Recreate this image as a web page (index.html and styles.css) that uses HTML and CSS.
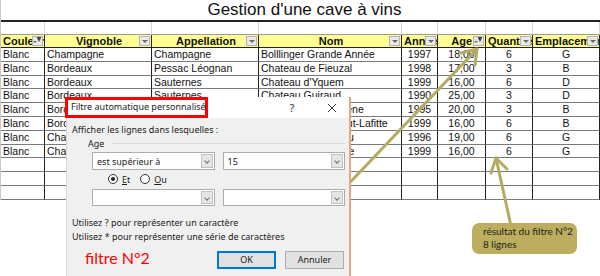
FILE: index.html
```html
<!DOCTYPE html>
<html lang="fr">
<head>
  <meta charset="UTF-8">
  <meta name="viewport" content="width=device-width, initial-scale=1.0">
  <link rel="stylesheet" href="styles.css">
  <title>Gestion d'une cave à vins</title>
</head>
<body>
  <div class="sheet">
    <h1 class="title">Gestion d'une cave à vins</h1>

    <div class="row blank">
      <div></div><div></div><div></div><div></div><div></div><div></div><div></div><div></div>
    </div>

    <div class="row head">
      <div class="left">Couleur<i class="fbtn on"></i></div>
      <div>Vignoble<i class="fbtn"></i></div>
      <div>Appellation<i class="fbtn"></i></div>
      <div>Nom<i class="fbtn"></i></div>
      <div class="left">Année<i class="fbtn"></i></div>
      <div class="right">Age<i class="fbtn on"></i></div>
      <div class="left">Quantité<i class="fbtn"></i></div>
      <div class="left">Emplacement<i class="fbtn"></i></div>
    </div>

    <div class="row">
      <div>Blanc</div><div>Champagne</div><div>Champagne</div><div>Bolllinger Grande Année</div>
      <div class="c">1997</div><div class="c">18,00</div><div class="c">6</div><div class="c">G</div>
    </div>
    <div class="row">
      <div>Blanc</div><div>Bordeaux</div><div>Pessac Léognan</div><div>Chateau de Fieuzal</div>
      <div class="c">1998</div><div class="c">17,00</div><div class="c">3</div><div class="c">B</div>
    </div>
    <div class="row">
      <div>Blanc</div><div>Bordeaux</div><div>Sauternes</div><div>Chateau d'Yquem</div>
      <div class="c">1999</div><div class="c">16,00</div><div class="c">6</div><div class="c">D</div>
    </div>
    <div class="row">
      <div>Blanc</div><div>Bordeaux</div><div>Sauternes</div><div>Chateau Guiraud</div>
      <div class="c">1990</div><div class="c">25,00</div><div class="c">3</div><div class="c">D</div>
    </div>
    <div class="row">
      <div>Blanc</div><div>Bordeaux</div><div>Sauternes</div><div>Chateau Doisy Daëne</div>
      <div class="c">1995</div><div class="c">20,00</div><div class="c">3</div><div class="c">B</div>
    </div>
    <div class="row">
      <div>Blanc</div><div>Bordeaux</div><div>Pessac Léognan</div><div>Chateau Smith Haut-Lafitte</div>
      <div class="c">1999</div><div class="c">16,00</div><div class="c">6</div><div class="c">B</div>
    </div>
    <div class="row">
      <div>Blanc</div><div>Chablis</div><div>Chablis Grand Cru</div><div>Domaine Raveneau</div>
      <div class="c">1996</div><div class="c">19,00</div><div class="c">6</div><div class="c">G</div>
    </div>
    <div class="row">
      <div>Blanc</div><div>Champagne</div><div>Champagne</div><div>Krug Grande Cuvée</div>
      <div class="c">1999</div><div class="c">16,00</div><div class="c">6</div><div class="c">G</div>
    </div>
    <div class="row">
      <div></div><div></div><div></div><div></div><div></div><div></div><div></div><div></div>
    </div>
    <div class="row">
      <div></div><div></div><div></div><div></div><div></div><div></div><div></div><div></div>
    </div>
    <div class="row">
      <div></div><div></div><div></div><div></div><div></div><div></div><div></div><div></div>
    </div>
  </div>

  <!-- arrows pointing at the filtered column and at the result rows -->
  <svg class="arrows" width="600" height="276" viewBox="0 0 600 276">
    <g fill="none" stroke="#b5aa62" stroke-width="3" stroke-linecap="round" stroke-linejoin="round">
      <line x1="338" y1="195" x2="477" y2="49"/>
      <polyline points="461,53 477,49 475,65"/>
      <line x1="511" y1="226" x2="496" y2="158"/>
      <polyline points="491,173 496,158 507,169"/>
    </g>
  </svg>

  <div class="dialog">
    <div class="dlg-bar">
      <span class="dlg-title">Filtre automatique personnalisé</span>
      <span class="dlg-help">?</span>
      <span class="dlg-close">
        <svg width="10" height="10" viewBox="0 0 10 10"><path d="M1 1L9 9M9 1L1 9" stroke="#333" stroke-width="1"/></svg>
      </span>
    </div>
    <div class="dlg-body">
      <p class="dlg-prompt">Afficher les lignes dans lesquelles :</p>
      <div class="dlg-group"><span>Age</span></div>
      <div class="combo-row">
        <div class="combo"><span>est supérieur à</span><i class="drop"></i></div>
        <div class="combo"><span>15</span><i class="drop"></i></div>
      </div>
      <div class="radio-row">
        <span class="radio on"><i></i><span><u>E</u>t</span></span>
        <span class="radio"><i></i><span><u>O</u>u</span></span>
      </div>
      <div class="combo-row second">
        <div class="combo"><span></span><i class="drop"></i></div>
        <div class="combo"><span></span><i class="drop"></i></div>
      </div>
      <p class="hint">Utilisez ? pour représenter un caractère<br>Utilisez * pour représenter une série de caractères</p>
      <div class="dlg-foot">
        <span class="note">filtre N°2</span>
        <span class="btn default">OK</span>
        <span class="btn">Annuler</span>
      </div>
    </div>
  </div>

  <div class="callout">résultat du filtre N°2<br>8 lignes</div>
</body>
</html>
```

FILE: styles.css
```css
*{
  margin: 0;
  padding: 0;
  box-sizing: border-box;
}
body{
  width: 600px;
  height: 276px;
  overflow: hidden;
  position: relative;
  background-color: #fff;
  font-family: "Liberation Sans", Arial, sans-serif;
  color: #111;
}

/* ---- spreadsheet ---- */
.sheet{
  border-left: 1px solid #c8c8c8;
}
.title{
  height: 22px;
  border-bottom: 2px solid #222;
  text-align: center;
  font-weight: normal;
  font-size: 17px;
  line-height: 20px;
  padding-left: 8px;
}
.row{
  display: grid;
  grid-template-columns: 44px 107px 107px 143px 36px 48px 47px 67px;
  height: 13.8px;
}
.row > div{
  position: relative;
  border-right: 1px solid #222;
  border-bottom: 1px solid #7a7a7a;
  font-size: 10.5px;
  line-height: 12.8px;
  padding-left: 2px;
  white-space: nowrap;
  overflow: hidden;
}
.row > .c{
  text-align: center;
  padding-left: 0;
}
.row.blank{
  height: 13px;
}
.row.blank > div{
  border-right-color: #d4d4d4;
  border-bottom-color: #9a9a9a;
}
.row.head{
  height: 13px;
}
.row.head > div{
  background-color: #ffff93;
  font-weight: bold;
  font-size: 11px;
  line-height: 12px;
  text-align: center;
  border-bottom-color: #222;
}
.row.head > .left{
  text-align: left;
}
.row.head > .right{
  text-align: right;
  padding-right: 13px;
}

/* filter drop buttons of the header */
.fbtn{
  position: absolute;
  right: 1px;
  top: 1px;
  width: 11px;
  height: 10px;
  background-color: #e9e9e9;
  border: 1px solid #b4b4b4;
}
.fbtn:after{
  content: '';
  position: absolute;
  left: 2px;
  top: 3px;
  border-left: 3px solid transparent;
  border-right: 3px solid transparent;
  border-top: 3px solid #6a6a6a;
}
.fbtn.on:after{
  left: 0;
  top: 4px;
  border-left-width: 2px;
  border-right-width: 2px;
  border-top-width: 2px;
}
.fbtn.on:before{
  content: '';
  position: absolute;
  left: 4px;
  top: 1px;
  width: 0;
  height: 0;
  border-left: 2.5px solid transparent;
  border-right: 2.5px solid transparent;
  border-top: 4px solid #444;
  box-shadow: 0 -1px 0 0 #444;
}

/* ---- arrows ---- */
.arrows{
  position: absolute;
  left: 0;
  top: 0;
}

/* ---- dialog ---- */
.dialog{
  position: absolute;
  left: 66px;
  top: 97px;
  width: 285px;
  height: 179px;
  background-color: #f0f0f0;
  border-left: 1px solid #d6d6d6;
  border-right: 2px solid #e8a87e;
  font-family: "Noto Sans", "Open Sans", sans-serif;
  font-size: 9px;
  color: #1b1b1b;
}
.dlg-bar{
  height: 21px;
  background-color: #fff;
  display: flex;
  align-items: center;
  padding-right: 7px;
}
.dlg-title{
  height: 21px;
  width: 143px;
  margin-left: -2px;
  border: 3px solid #f00;
  padding-left: 3px;
  line-height: 14px;
  white-space: nowrap;
}
.dlg-help{
  margin-left: auto;
  width: 20px;
  text-align: center;
  font-size: 11px;
  color: #333;
}
.dlg-close{
  margin-left: 20px;
  width: 20px;
  display: flex;
  justify-content: center;
}
.dlg-body{
  padding: 0 4px 0 5px;
}
.dlg-prompt{
  margin-top: 6px;
  line-height: 12px;
}
.dlg-group{
  display: flex;
  align-items: center;
  height: 12px;
  margin-top: 1px;
  padding-left: 16px;
}
.dlg-group:after{
  content: '';
  flex: 1;
  margin-left: 8px;
  border-top: 1px solid #dcdcdc;
}
.combo-row{
  display: flex;
  gap: 8px;
  margin-top: 3px;
  padding-left: 20px;
  height: 18px;
}
.combo-row.second{
  margin-top: 2px;
  height: 17px;
}
.combo{
  flex: 1;
  display: flex;
  align-items: center;
  background-color: #fff;
  border: 1px solid #adadad;
  padding: 1px 1px 1px 4px;
}
.combo span{
  flex: 1;
}
.drop{
  width: 12px;
  height: 100%;
  background-color: #e5e5e5;
  border: 1px solid #c2c2c2;
  position: relative;
}
.drop:after{
  content: '';
  position: absolute;
  left: 3px;
  top: 4px;
  width: 3px;
  height: 3px;
  border-right: 1px solid #707070;
  border-bottom: 1px solid #707070;
  transform: rotate(45deg);
}
.radio-row{
  display: flex;
  align-items: center;
  height: 16px;
  margin-top: 1px;
  padding-left: 36px;
  gap: 10px;
}
.radio{
  display: flex;
  align-items: center;
  gap: 4px;
}
.radio i{
  width: 10px;
  height: 10px;
  border-radius: 50%;
  border: 1px solid #333;
  background-color: #fff;
  position: relative;
}
.radio.on i:after{
  content: '';
  position: absolute;
  left: 2px;
  top: 2px;
  width: 4px;
  height: 4px;
  border-radius: 50%;
  background-color: #222;
}
.hint{
  margin-top: 10px;
  line-height: 14px;
}
.dlg-foot{
  display: flex;
  align-items: flex-start;
  margin-top: 7px;
  padding-right: 1px;
}
.note{
  margin-left: 13px;
  margin-top: -3px;
  font-family: Lato, "Liberation Sans", sans-serif;
  font-size: 16px;
  line-height: 20px;
  color: #f00;
}
.btn{
  width: 59px;
  height: 18px;
  line-height: 16px;
  text-align: center;
  background-color: #e1e1e1;
  border: 1px solid #adadad;
}
.btn.default{
  margin-left: auto;
  margin-right: 9px;
  border-color: #0078d7;
  box-shadow: inset 0 0 0 1px #0078d7;
}

/* ---- callout ---- */
.callout{
  position: absolute;
  left: 472px;
  top: 223px;
  width: 105px;
  height: 31px;
  border-radius: 7px;
  background-color: #bcae5e;
  padding: 2px 0 0 11px;
  font-family: Lato, "Liberation Sans", sans-serif;
  font-size: 10px;
  line-height: 13px;
  color: #1d1d1d;
}
```
